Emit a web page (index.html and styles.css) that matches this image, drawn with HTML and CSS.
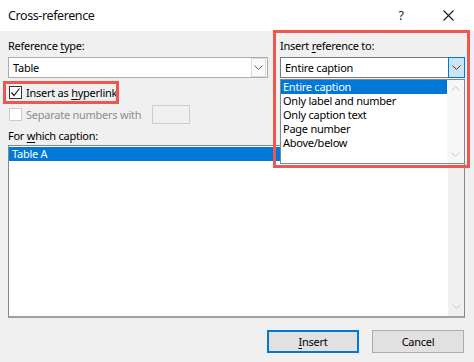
FILE: index.html
```html
<!DOCTYPE html>
<html>
<head>
<meta charset="utf-8">
<link rel="stylesheet" href="styles.css">
</head>
<body>
<div class="dialog">
  <div class="titlebar">
    <span class="title">Cross-reference</span>
    <span class="help">?</span>
    <span class="close"><svg width="11" height="11" viewBox="0 0 11 11"><path d="M0.5 0.5 L10.5 10.5 M10.5 0.5 L0.5 10.5" stroke="#1a1a1a" stroke-width="1.1" fill="none"/></svg></span>
  </div>
  <div class="content">
    <div class="columns">
      <div class="col-left">
        <div class="label">Reference <u>t</u>ype:</div>
        <div class="combo">
          <span class="combo-text">Table</span>
          <span class="combo-btn"><svg width="9" height="5" viewBox="0 0 9 5"><path d="M0.5 0.5 L4.5 4.5 L8.5 0.5" stroke="#606060" stroke-width="1" fill="none"/></svg></span>
        </div>
        <div class="check-row">
          <span class="checkbox checked"><svg width="11" height="11" viewBox="0 0 11 11"><path d="M1.5 5.5 L4 8.5 L9.5 1.5" stroke="#1a1a1a" stroke-width="1.2" fill="none"/></svg></span>
          <span class="check-label">Insert as <u>h</u>yperlink</span>
        </div>
        <div class="sep-row">
          <span class="checkbox disabled"></span>
          <span class="sep-label">Separate numbers with</span>
          <span class="sep-input"></span>
        </div>
      </div>
      <div class="col-right">
        <div class="label">Insert <u>r</u>eference to:</div>
        <div class="combo combo-open">
          <span class="combo-text">Entire caption</span>
          <span class="combo-btn active"><svg width="9" height="5" viewBox="0 0 9 5"><path d="M0.5 0.5 L4.5 4.5 L8.5 0.5" stroke="#404040" stroke-width="1" fill="none"/></svg></span>
          <div class="popup">
            <div class="popup-items">
              <div class="item selected">Entire caption</div>
              <div class="item">Only label and number</div>
              <div class="item">Only caption text</div>
              <div class="item">Page number</div>
              <div class="item">Above/below</div>
            </div>
            <div class="popup-scroll">
              <svg width="9" height="5" viewBox="0 0 9 5"><path d="M0.5 4.5 L4.5 0.5 L8.5 4.5" stroke="#c8c8c8" stroke-width="1" fill="none"/></svg>
              <svg width="9" height="5" viewBox="0 0 9 5"><path d="M0.5 0.5 L4.5 4.5 L8.5 0.5" stroke="#c8c8c8" stroke-width="1" fill="none"/></svg>
            </div>
          </div>
        </div>
      </div>
    </div>
    <div class="label caption-label">For <u>w</u>hich caption:</div>
    <div class="listbox">
      <div class="list-items">
        <div class="list-item selected">Table A</div>
      </div>
      <div class="list-scroll">
        <svg width="9" height="5" viewBox="0 0 9 5"><path d="M0.5 4.5 L4.5 0.5 L8.5 4.5" stroke="#c8c8c8" stroke-width="1" fill="none"/></svg>
        <svg width="9" height="5" viewBox="0 0 9 5"><path d="M0.5 0.5 L4.5 4.5 L8.5 0.5" stroke="#c8c8c8" stroke-width="1" fill="none"/></svg>
      </div>
    </div>
    <div class="buttons">
      <span class="btn default"><u>I</u>nsert</span>
      <span class="btn">Cancel</span>
    </div>
  </div>
  <div class="highlight hl-check"></div>
  <div class="highlight hl-ref"></div>
</div>
</body>
</html>
```

FILE: styles.css
```css
* { box-sizing: border-box; }
html, body { margin: 0; padding: 0; }
body {
  width: 474px;
  height: 362px;
  overflow: hidden;
  font-family: "Noto Sans", "Open Sans", sans-serif;
  font-size: 11px;
  letter-spacing: -0.25px;
  color: #000;
  background: #fff;
  white-space: nowrap;
}
u { text-decoration: underline; text-underline-offset: 2px; text-decoration-thickness: 1px; }
.dialog {
  position: relative;
  width: 474px;
  height: 362px;
  display: flex;
  flex-direction: column;
}
.titlebar {
  height: 31px;
  flex: 0 0 31px;
  background: #fff;
  display: flex;
  align-items: center;
  padding-left: 8px;
}
.title { font-size: 12.5px; letter-spacing: -0.4px; color: #111; flex: 1; }
.help { font-size: 12.5px; color: #222; width: 12px; margin-right: 36px; text-align: center; }
.close { width: 11px; height: 11px; margin-right: 20px; display: flex; }
.content {
  flex: 1;
  background: #f0f0f0;
  padding: 7px 9px 0 8px;
  display: flex;
  flex-direction: column;
}
.columns {
  display: grid;
  grid-template-columns: 260px 185px;
  column-gap: 12px;
}
.label { line-height: 16px; height: 16px; }
.combo {
  position: relative;
  margin-top: 3px;
  height: 21px;
  background: #fff;
  border: 1px solid #acacac;
  display: flex;
  align-items: center;
}
.combo-text { flex: 1; padding-left: 4px; line-height: 16px; }
.combo-btn {
  width: 15px;
  height: 19px;
  margin-right: 1px;
  display: flex;
  align-items: center;
  justify-content: center;
  border: 1px solid #dcdcdc;
  background: #fafafa;
}
.combo-btn.active {
  width: 17px;
  height: 21px;
  margin: -1px -1px -1px 0;
  background: #cce4f7;
  border: 1px solid #0078d7;
}
.combo-open { border-color: #7a7a7a; }
.popup {
  position: absolute;
  left: -1px;
  right: -1px;
  top: 21px;
  height: 85px;
  background: #fff;
  border: 1px solid #828790;
  display: flex;
  z-index: 2;
}
.popup-items { flex: 1; }
.item { line-height: 14px; height: 14px; padding-left: 2px; }
.item.selected { background: #0078d7; color: #fff; }
.popup-scroll {
  width: 17px;
  background: #f7f7f7;
  display: flex;
  flex-direction: column;
  justify-content: space-between;
  align-items: center;
  padding: 6px 0 6px;
}
.check-row {
  margin-top: 8px;
  display: flex;
  align-items: center;
  height: 13px;
}
.checkbox {
  flex: 0 0 13px;
  width: 13px;
  height: 13px;
  border: 1px solid #333;
  background: #fff;
  margin-left: 1px;
  display: flex;
  align-items: center;
  justify-content: center;
}
.checkbox.disabled { border-color: #cccccc; background: #fff; }
.check-label { margin-left: 4px; line-height: 16px; }
.sep-row {
  margin-top: 6px;
  display: flex;
  align-items: center;
  height: 19px;
}
.sep-label { margin-left: 4px; flex: 0 0 126px; color: #8d8d8d; line-height: 16px; }
.sep-input {
  flex: 0 0 38px;
  height: 19px;
  border: 1px solid #cccccc;
  background: #f0f0f0;
}
.caption-label { margin-top: 4px; }
.listbox {
  margin-top: 1px;
  height: 173px;
  background: #fff;
  border: 1px solid #828790;
  border-bottom-width: 2px;
  border-bottom-color: #a0a0a0;
  display: flex;
}
.list-items { flex: 1; padding-top: 1px; }
.list-item { line-height: 14px; height: 14px; padding-left: 3px; }
.list-item.selected { background: #0078d7; color: #fff; }
.list-scroll {
  width: 16px;
  background: #f0f0f0;
  display: flex;
  flex-direction: column;
  justify-content: space-between;
  align-items: center;
  padding: 6px 0 7px;
}
.buttons {
  margin-top: 12px;
  display: flex;
  justify-content: flex-end;
  gap: 13px;
  padding-right: 1px;
}
.btn {
  width: 92px;
  height: 23px;
  border: 1px solid #adadad;
  background: #e1e1e1;
  display: flex;
  align-items: center;
  justify-content: center;
  line-height: 16px;
}
.btn.default { border: 2px solid #0078d7; }
.highlight {
  position: absolute;
  border: 3px solid #f05650;
  pointer-events: none;
}
.hl-check { left: 3px; top: 81px; width: 116px; height: 23px; }
.hl-ref { left: 273px; top: 30px; width: 197px; height: 138px; }
```
